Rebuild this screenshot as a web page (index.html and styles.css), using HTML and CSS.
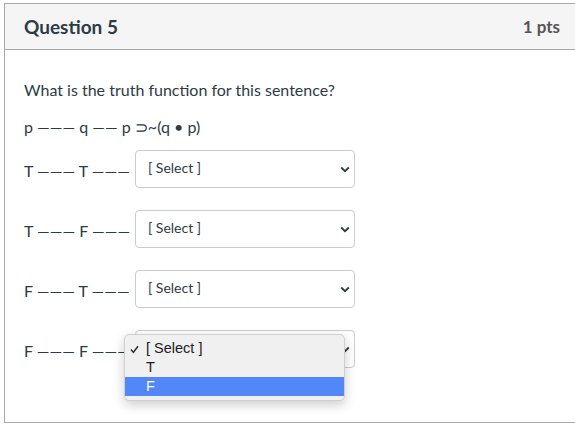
FILE: index.html
```html
<!DOCTYPE html>
<html>
<head>
<meta charset="utf-8">
<link rel="stylesheet" href="styles.css">
</head>
<body>
<div class="question">
  <div class="header">
    <div class="title">Question 5</div>
    <div class="pts">1 pts</div>
  </div>
  <div class="content">
    <p class="prompt">What is the truth function for this sentence?</p>
    <p class="formula">p ——— q —— p ⊃~(q • p)</p>
    <div class="rows">
      <div class="row">
        <span class="label">T ——— T ———</span>
        <div class="select"><span>[ Select ]</span><svg class="chev" width="10" height="7" viewBox="0 0 10 7"><path d="M1.2 1.5 L5 5.2 L8.8 1.5" fill="none" stroke="#2d3b45" stroke-width="1.8"/></svg></div>
      </div>
      <div class="row">
        <span class="label">T ——— F ———</span>
        <div class="select"><span>[ Select ]</span><svg class="chev" width="10" height="7" viewBox="0 0 10 7"><path d="M1.2 1.5 L5 5.2 L8.8 1.5" fill="none" stroke="#2d3b45" stroke-width="1.8"/></svg></div>
      </div>
      <div class="row">
        <span class="label">F ——— T ———</span>
        <div class="select"><span>[ Select ]</span><svg class="chev" width="10" height="7" viewBox="0 0 10 7"><path d="M1.2 1.5 L5 5.2 L8.8 1.5" fill="none" stroke="#2d3b45" stroke-width="1.8"/></svg></div>
      </div>
      <div class="row">
        <span class="label">F ——— F ———</span>
        <div class="select open"><span>[ Select ]</span><svg class="chev" width="10" height="7" viewBox="0 0 10 7"><path d="M1.2 1.5 L5 5.2 L8.8 1.5" fill="none" stroke="#2d3b45" stroke-width="1.8"/></svg>
          <div class="menu">
            <div class="opt checked"><svg class="check" width="9" height="9" viewBox="0 0 9 9"><path d="M1 4.6 L3.4 7.4 L8 1.2" fill="none" stroke="#2a2a2a" stroke-width="1.5"/></svg>[ Select ]</div>
            <div class="opt">T</div>
            <div class="opt active">F</div>
          </div>
        </div>
      </div>
    </div>
  </div>
</div>
</body>
</html>
```

FILE: styles.css
```css
html, body {
  margin: 0;
  padding: 0;
  overflow: hidden;
  background: #fff;
}
body {
  font-family: Lato, "Liberation Sans", sans-serif;
  color: #2d3b45;
}
.question {
  margin: 3px 0 0 4px;
  width: 570px;
  height: 418px;
  border: 1px solid #a9a9a9;
  box-sizing: content-box;
}
.header {
  height: 45px;
  background: #f5f5f5;
  border-bottom: 1px solid #a9a9a9;
  display: flex;
  align-items: center;
  justify-content: space-between;
  padding: 0 15px 0 19px;
}
.title {
  font-size: 19px;
  font-weight: bold;
  color: #2d3b45;
}
.pts {
  font-size: 17px;
  font-weight: bold;
  color: #555;
}
.content {
  padding: 21px 19px 0 19px;
}
.prompt {
  margin: 0;
  font-size: 16px;
  line-height: 38px;
}
.formula {
  margin: 0;
  font-size: 16px;
  line-height: 36px;
}
.rows {
  display: flex;
  flex-direction: column;
  gap: 22px;
  margin-top: 5px;
}
.row {
  display: flex;
  align-items: center;
  height: 38px;
}
.label {
  font-size: 16px;
  width: 111px;
  flex: none;
  white-space: nowrap;
  margin-top: 3px;
}
.select {
  position: relative;
  width: 220px;
  height: 38px;
  border: 1px solid #c7cdd1;
  border-radius: 4px;
  display: flex;
  align-items: center;
  justify-content: space-between;
  padding: 0 4px 0 12px;
  font-size: 14px;
  background: #fff;
  box-sizing: border-box;
}
.select span {
  margin-top: -3px;
}
.menu {
  position: absolute;
  left: -12px;
  top: 3px;
  width: 221px;
  background: #f0f0f0;
  border: 1px solid #cfcfcf;
  border-radius: 5px;
  box-shadow: 0 4px 12px rgba(0,0,0,0.2);
  padding: 4px 0 4px 0;
  font-family: "Liberation Sans", Arial, sans-serif;
  font-size: 14.5px;
  color: #222;
  box-sizing: border-box;
}
.opt {
  height: 19px;
  line-height: 19px;
  padding-left: 21px;
  position: relative;
}
.opt.active {
  background: #5187f6;
  color: #fff;
}
.check {
  position: absolute;
  left: 5px;
  top: 6px;
}
```
